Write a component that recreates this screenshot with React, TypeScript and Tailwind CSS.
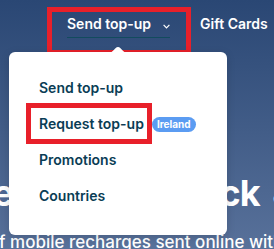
import React from 'react';

const menuItems = ['Send top-up', 'Request top-up', 'Promotions', 'Countries'];

const App: React.FC = () => {
  return (
    <div className="relative w-[274px] h-[249px] overflow-hidden bg-gradient-to-b from-[#2a4774] to-[#58719a] font-['Inter',sans-serif] text-white">
      {/* top nav */}
      <nav className="flex pt-[14px] pl-[67px] gap-[30px] h-[48px] text-[14px] leading-[20px] font-semibold whitespace-nowrap">
        <div className="relative">
          <button className="flex items-center gap-[12px] pb-[3px] border-b border-[#124b5e] text-white">
            <span>Send top-up</span>
            <svg width="7" height="5" viewBox="0 0 7 5" className="mt-[5px]">
              <path d="M0.6 0.8 L3.5 3.8 L6.4 0.8" fill="none" stroke="currentColor" strokeWidth="1.2" />
            </svg>
          </button>
          <span className="absolute -left-[20px] -right-[21px] -top-[7px] -bottom-[7px] border-[5px] border-[#e8202a] pointer-events-none" />
        </div>
        <a className="text-white">Gift Cards</a>
      </nav>

      {/* hero behind the menu */}
      <section className="mt-[125px] whitespace-nowrap">
        <h1 className="-ml-[79px] text-[36px] leading-[40px] font-bold tracking-[-1px] [word-spacing:-5px]">
          Make recharge quick<span className="[word-spacing:5px]"> &amp; easy</span>
        </h1>
        <p className="mt-[17px] -ml-[78px] text-[17px] leading-[24px] font-medium">
          Millions of mobile recharges sent online with ease
        </p>
      </section>

      {/* dropdown menu */}
      <div className="absolute left-[9px] top-[52px] w-[218px] h-[183px] bg-white rounded-[6px] shadow-[0_2px_8px_rgba(0,0,0,0.15)]">
        <svg
          className="absolute -top-[5px] left-1/2 -translate-x-1/2"
          width="19"
          height="6"
          viewBox="0 0 19 6"
        >
          <path d="M0 6 C5 6 6 0 9.5 0 C13 0 14 6 19 6 Z" fill="#ffffff" />
        </svg>
        <ul className="pt-[18px] pl-[30px] text-[14px] leading-[20px] font-semibold text-[#0a3d55]">
          {menuItems.map((item) => (
            <li key={item} className="flex items-center h-[36px]">
              {item === 'Request top-up' ? (
                <>
                  <span className="relative">
                    {item}
                    <span className="absolute -left-[13px] -right-[8px] -top-[11px] -bottom-[10px] border-[5px] border-[#e8202a] pointer-events-none" />
                  </span>
                  <span className="ml-[8px] h-[15px] px-[5px] rounded-full bg-[#5b9cf2] text-white text-[10px] leading-[15px] font-bold">
                    Ireland
                  </span>
                </>
              ) : (
                <span>{item}</span>
              )}
            </li>
          ))}
        </ul>
      </div>
    </div>
  );
};

export default App;
